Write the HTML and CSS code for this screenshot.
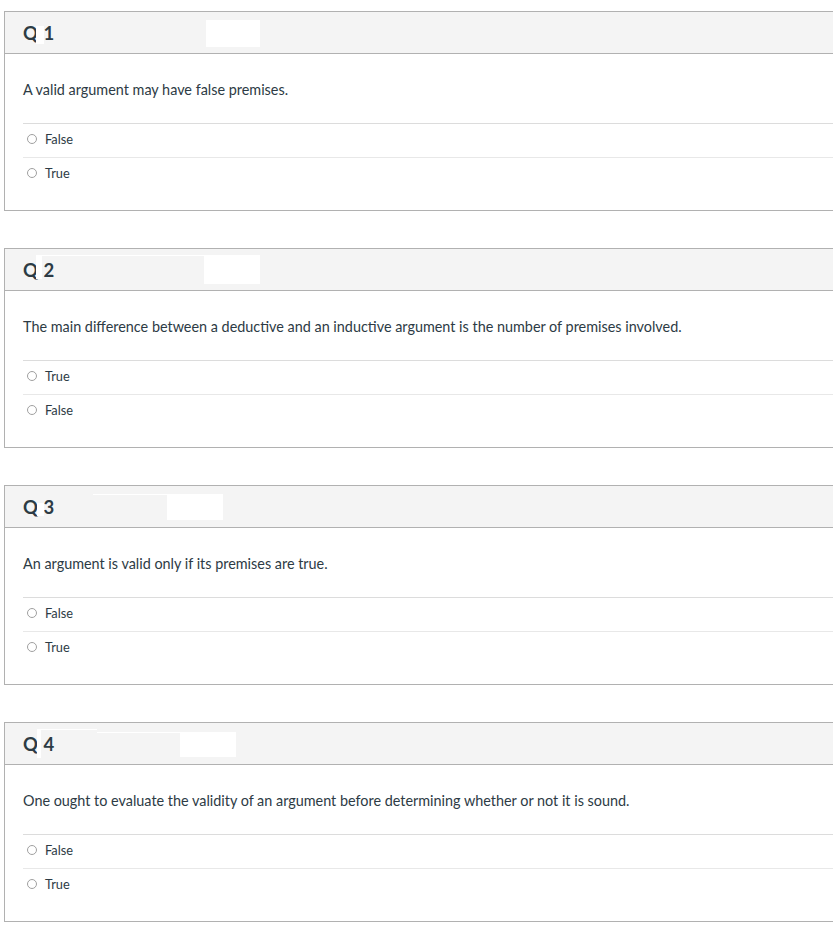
FILE: index.html
```html
<!DOCTYPE html>
<html lang="en">
<head>
<meta charset="utf-8">
<title>Quiz</title>
<link rel="stylesheet" href="styles.css">
</head>
<body>
<div class="quiz">
  <div class="question">
    <div class="q-header">
      <span class="q-title">Q 1</span>
      <span class="mask" style="left:31px;top:14px;width:8px;height:18px"></span>
      <span class="mask" style="left:201px;top:8px;width:54px;height:27px"></span>
    </div>
    <div class="q-text">A valid argument may have false premises.</div>
    <div class="answers">
      <div class="answer"><span class="radio"></span><span class="label">False</span></div>
      <div class="answer"><span class="radio"></span><span class="label">True</span></div>
    </div>
  </div>

  <div class="question">
    <div class="q-header">
      <span class="q-title">Q 2</span>
      <span class="mask" style="left:31px;top:6px;width:6px;height:24px"></span>
      <span class="mask" style="left:31px;top:6px;width:168px;height:1px"></span>
      <span class="mask" style="left:199px;top:6px;width:56px;height:29px"></span>
    </div>
    <div class="q-text">The main difference between a deductive and an inductive argument is the number of premises involved.</div>
    <div class="answers">
      <div class="answer"><span class="radio"></span><span class="label">True</span></div>
      <div class="answer"><span class="radio"></span><span class="label">False</span></div>
    </div>
  </div>

  <div class="question">
    <div class="q-header">
      <span class="q-title">Q 3</span>
      <span class="mask" style="left:32px;top:17px;width:7px;height:13px"></span>
      <span class="mask" style="left:88px;top:8px;width:74px;height:1px"></span>
      <span class="mask" style="left:162px;top:8px;width:56px;height:26px"></span>
    </div>
    <div class="q-text">An argument is valid only if its premises are true.</div>
    <div class="answers">
      <div class="answer"><span class="radio"></span><span class="label">False</span></div>
      <div class="answer"><span class="radio"></span><span class="label">True</span></div>
    </div>
  </div>

  <div class="question">
    <div class="q-header">
      <span class="q-title">Q 4</span>
      <span class="mask" style="left:32px;top:6px;width:4px;height:29px"></span>
      <span class="mask" style="left:32px;top:6px;width:60px;height:1px"></span>
      <span class="mask" style="left:92px;top:9px;width:83px;height:1px"></span>
      <span class="mask" style="left:175px;top:9px;width:56px;height:25px"></span>
    </div>
    <div class="q-text">One ought to evaluate the validity of an argument before determining whether or not it is sound.</div>
    <div class="answers">
      <div class="answer"><span class="radio"></span><span class="label">False</span></div>
      <div class="answer"><span class="radio"></span><span class="label">True</span></div>
    </div>
  </div>
</div>
</body>
</html>
```

FILE: styles.css
```css
html, body {
  margin: 0;
  padding: 0;
  background: #ffffff;
  overflow-x: hidden;
}

body {
  font-family: Lato, "Liberation Sans", sans-serif;
  color: #2d3b45;
}

.quiz {
  display: flex;
  flex-direction: column;
  gap: 37px;
  padding: 11px 0 0 4px;
}

.question {
  border: 1px solid #b1b1b1;
  margin-right: -12px;
  padding-bottom: 19px;
  background: #fff;
}

.q-header {
  position: relative;
  height: 41px;
  display: flex;
  align-items: center;
  padding-left: 18px;
  background: #f4f4f4;
  border-bottom: 1px solid #b1b1b1;
}

.q-title {
  font-size: 18.5px;
  font-weight: 700;
  line-height: 22px;
  word-spacing: 1px;
  color: #2d3b45;
}

.mask {
  position: absolute;
  background: #ffffff;
}

.q-text {
  padding: 26px 18px 23px 18px;
  font-size: 14.4px;
  line-height: 20px;
}

.answers {
  margin-left: 18px;
}

.answer {
  display: flex;
  align-items: center;
  height: 33px;
  box-sizing: content-box;
  border-top: 1px solid #dcdcdc;
}

.answer + .answer {
  border-top-color: #e8e8e8;
}

.answer .radio {
  width: 8px;
  height: 8px;
  border: 1px solid #a0a0a0;
  border-radius: 50%;
  margin: -3px 8px 0 4px;
  background: #fff;
  flex: none;
}

.answer .label {
  font-size: 12.8px;
  line-height: 20px;
  margin-top: -4px;
}
```
